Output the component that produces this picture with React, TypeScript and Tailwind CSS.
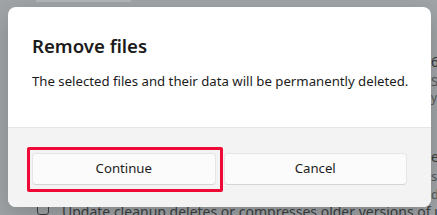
function DialogButton({ label }: { label: string }) {
  return (
    <button className="w-full h-[32px] rounded-[4px] bg-[#fbfbfb] border border-[#e5e5e5] border-b-[#d4d4d4] text-[13.2px] text-[#1b1b1b]">
      {label}
    </button>
  );
}

export default function App() {
  return (
    <div className="relative w-[437px] h-[215px] overflow-hidden bg-[#a0a4a6] font-['Noto_Sans',sans-serif]">
      {/* dimmed settings page underneath */}
      <div className="flex flex-col">
        <div className="ml-[36px] w-[95px] h-[2px] bg-[#b3b6b8]" />
        <div className="grid grid-cols-[431px_1fr] h-[201px]">
          <div />
          <div className="flex flex-col pt-[50px] whitespace-nowrap">
            <span className="text-[14px] leading-[20px] text-[#383b3c]">6.1 GB</span>
            <span className="text-[13px] leading-[18px] text-[#555859]">Settings</span>
            <span className="text-[12px] leading-[16px] text-[#555859]">you</span>
            <span className="mt-[41px] text-[14px] leading-[20px] text-[#383b3c]">e...</span>
            <span className="text-[13px] leading-[18px] text-[#555859]">s</span>
            <span className="text-[13px] leading-[18px] text-[#555859]">d</span>
          </div>
        </div>
        <div className="flex items-start gap-[13px] pl-[37px] whitespace-nowrap">
          <div className="w-[12px] h-[12px] shrink-0 rounded-[3px] border border-[#3d4041]" />
          <span className="-mt-[1px] text-[14px] leading-[20px] text-[#3d4041]">
            Update cleanup deletes or compresses older versions of updates
          </span>
        </div>
      </div>

      {/* dialog */}
      <div className="absolute left-[8px] top-[7px] w-[423px] h-[200px] flex flex-col overflow-hidden rounded-[8px] bg-white shadow-[0_8px_24px_rgba(0,0,0,0.18)]">
        <div className="h-[120px] px-[24px] pt-[25px]">
          <h1 className="text-[18.6px] leading-[28px] font-semibold text-[#1b1b1b]">Remove files</h1>
          <p className="mt-[11px] text-[13.2px] leading-[20px] text-[#1b1b1b] whitespace-nowrap">
            The selected files and their data will be permanently deleted.
          </p>
        </div>
        <div className="flex-1 grid grid-cols-2 items-start gap-[8px] px-[24px] pt-[25px] bg-[#f3f3f3] border-t border-[#e5e5e5]">
          <div className="-ml-[5px] -mr-[7px] -mt-[6px] pl-[2px] pr-[4px] pt-[3px] pb-[4px] border-[3px] border-[#ee0a35] rounded-[2px]">
            <DialogButton label="Continue" />
          </div>
          <DialogButton label="Cancel" />
        </div>
      </div>
    </div>
  );
}
